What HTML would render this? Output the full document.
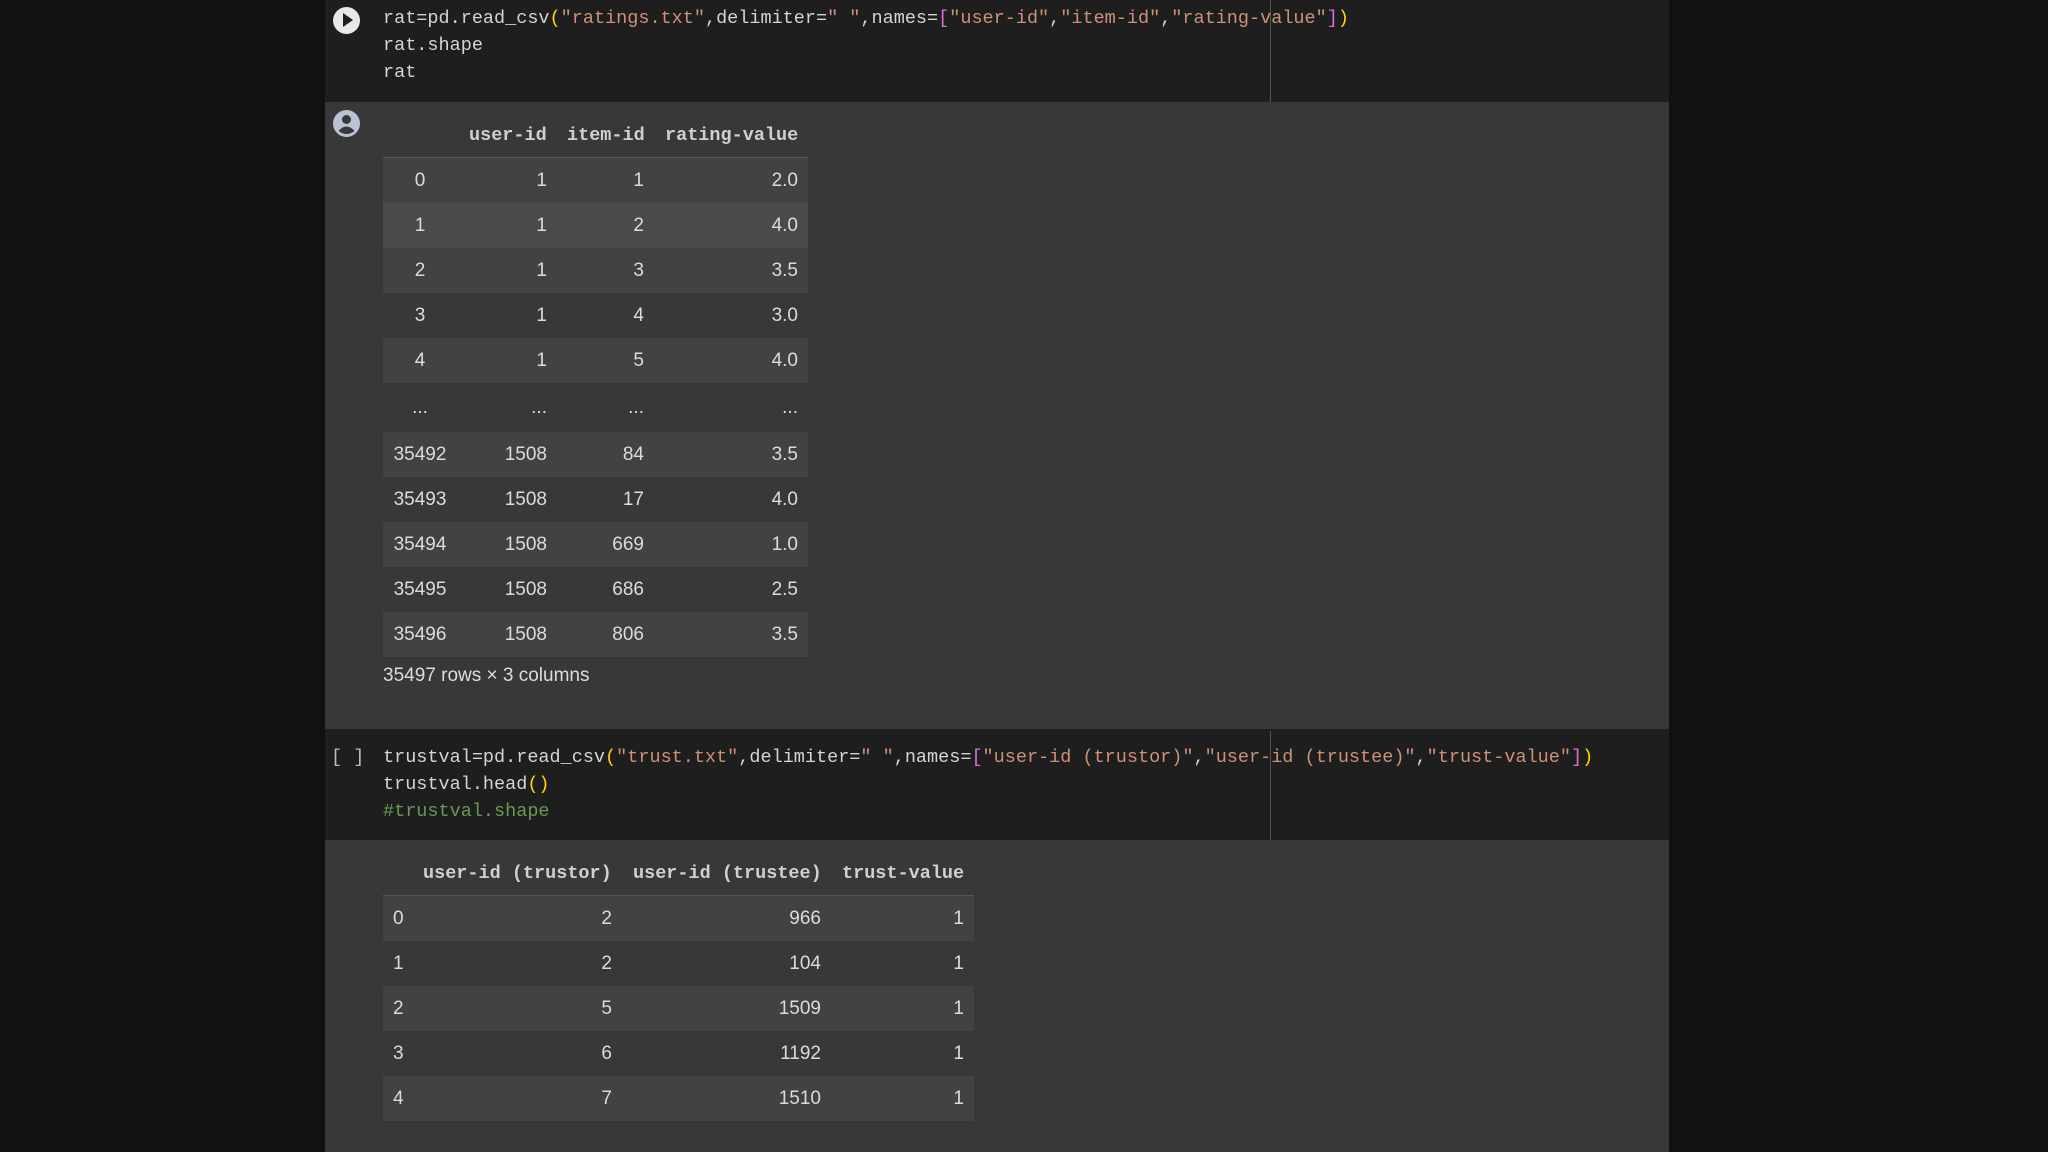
<!DOCTYPE html>
<html><head><meta charset="utf-8"><style>
*{margin:0;padding:0;box-sizing:border-box}
body{width:2048px;height:1152px;background:#111111;position:relative;overflow:hidden;font-family:"Liberation Sans",Arial,sans-serif;color:#d8d8d8}
.a{position:absolute}
.code{font-family:"Liberation Mono",monospace;font-size:18.5px;color:#d4d4d4;white-space:pre;line-height:27px}
.s{color:#ce9178}.y{color:#ffd700}.p{color:#da70d6}.g{color:#6a9955}
.row{position:absolute;height:45px}
.t{position:absolute;font-size:19px;line-height:45px;color:#dcdcdc;white-space:nowrap}
.r{text-align:right}
.h{position:absolute;font-family:"Liberation Mono",monospace;font-weight:bold;font-size:18.5px;color:#d0d0d0;white-space:pre}
</style></head><body>
<!-- cell 1 -->
<div class="a" style="left:325px;top:0;width:1344px;height:102px;background:#1e1e1e"></div>
<div class="a" style="left:1270px;top:0;width:1px;height:102px;background:#555"></div>
<div class="a" style="left:333px;top:7px;width:27px;height:27px;border-radius:50%;background:#e8e8e8"></div>
<div class="a" style="left:343px;top:13px;width:0;height:0;border-left:10px solid #1e1e1e;border-top:7px solid transparent;border-bottom:7px solid transparent"></div>
<div class="a code" style="left:383px;top:5px">rat=pd.read_csv<span class="y">(</span><span class="s">"ratings.txt"</span>,delimiter=<span class="s">" "</span>,names=<span class="p">[</span><span class="s">"user-id"</span>,<span class="s">"item-id"</span>,<span class="s">"rating-value"</span><span class="p">]</span><span class="y">)</span>
rat.shape
rat</div>
<div class="a" style="left:325px;top:102px;width:1344px;height:627px;background:#383838"></div>
<svg class="a" style="left:332px;top:109px" width="29" height="29" viewBox="0 0 29 29"><circle cx="14.5" cy="14.5" r="13.5" fill="#b8c4d6"/><circle cx="14.5" cy="10.5" r="4.5" fill="#383838"/><path d="M6.5 22 Q14.5 13 22.5 22 Q14.5 28 6.5 22Z" fill="#383838"/></svg>
<div class="h" style="left:469px;top:125px">user-id</div>
<div class="h" style="left:567px;top:125px">item-id</div>
<div class="h" style="left:665px;top:125px">rating-value</div>
<div class="a" style="left:383px;top:157px;width:425px;height:1px;background:#555"></div>
<div class="row" style="left:383px;top:158px;width:425px;background:#424242"></div>
<div class="row" style="left:383px;top:203px;width:425px;background:#4a4a4a"></div>
<div class="row" style="left:383px;top:248px;width:425px;background:#424242"></div>
<div class="row" style="left:383px;top:338px;width:425px;background:#424242"></div>
<div class="row" style="left:383px;top:432px;width:425px;background:#424242"></div>
<div class="row" style="left:383px;top:522px;width:425px;background:#424242"></div>
<div class="row" style="left:383px;top:612px;width:425px;background:#424242"></div>
<!-- table1 text -->
<div class="a" style="left:0;top:0">
<div class="t" style="left:390px;top:158px;width:60px;text-align:center">0</div><div class="t r" style="left:447px;top:158px;width:100px">1</div><div class="t r" style="left:544px;top:158px;width:100px">1</div><div class="t r" style="left:698px;top:158px;width:100px">2.0</div>
<div class="t" style="left:390px;top:203px;width:60px;text-align:center">1</div><div class="t r" style="left:447px;top:203px;width:100px">1</div><div class="t r" style="left:544px;top:203px;width:100px">2</div><div class="t r" style="left:698px;top:203px;width:100px">4.0</div>
<div class="t" style="left:390px;top:248px;width:60px;text-align:center">2</div><div class="t r" style="left:447px;top:248px;width:100px">1</div><div class="t r" style="left:544px;top:248px;width:100px">3</div><div class="t r" style="left:698px;top:248px;width:100px">3.5</div>
<div class="t" style="left:390px;top:293px;width:60px;text-align:center">3</div><div class="t r" style="left:447px;top:293px;width:100px">1</div><div class="t r" style="left:544px;top:293px;width:100px">4</div><div class="t r" style="left:698px;top:293px;width:100px">3.0</div>
<div class="t" style="left:390px;top:338px;width:60px;text-align:center">4</div><div class="t r" style="left:447px;top:338px;width:100px">1</div><div class="t r" style="left:544px;top:338px;width:100px">5</div><div class="t r" style="left:698px;top:338px;width:100px">4.0</div>
<div class="t" style="left:390px;top:385px;width:60px;text-align:center">...</div><div class="t r" style="left:447px;top:385px;width:100px">...</div><div class="t r" style="left:544px;top:385px;width:100px">...</div><div class="t r" style="left:698px;top:385px;width:100px">...</div>
<div class="t" style="left:390px;top:432px;width:60px;text-align:center">35492</div><div class="t r" style="left:447px;top:432px;width:100px">1508</div><div class="t r" style="left:544px;top:432px;width:100px">84</div><div class="t r" style="left:698px;top:432px;width:100px">3.5</div>
<div class="t" style="left:390px;top:477px;width:60px;text-align:center">35493</div><div class="t r" style="left:447px;top:477px;width:100px">1508</div><div class="t r" style="left:544px;top:477px;width:100px">17</div><div class="t r" style="left:698px;top:477px;width:100px">4.0</div>
<div class="t" style="left:390px;top:522px;width:60px;text-align:center">35494</div><div class="t r" style="left:447px;top:522px;width:100px">1508</div><div class="t r" style="left:544px;top:522px;width:100px">669</div><div class="t r" style="left:698px;top:522px;width:100px">1.0</div>
<div class="t" style="left:390px;top:567px;width:60px;text-align:center">35495</div><div class="t r" style="left:447px;top:567px;width:100px">1508</div><div class="t r" style="left:544px;top:567px;width:100px">686</div><div class="t r" style="left:698px;top:567px;width:100px">2.5</div>
<div class="t" style="left:390px;top:612px;width:60px;text-align:center">35496</div><div class="t r" style="left:447px;top:612px;width:100px">1508</div><div class="t r" style="left:544px;top:612px;width:100px">806</div><div class="t r" style="left:698px;top:612px;width:100px">3.5</div>
<div class="t" style="left:383px;top:653px">35497 rows × 3 columns</div>
</div>
<!-- cell 2 -->
<div class="a" style="left:325px;top:729px;width:1344px;height:111px;background:#1e1e1e"></div>
<div class="a" style="left:1270px;top:731px;width:1px;height:109px;background:#555"></div>
<div class="a code" style="left:331px;top:744px;color:#bbb">[ ]</div>
<div class="a code" style="left:383px;top:744px">trustval=pd.read_csv<span class="y">(</span><span class="s">"trust.txt"</span>,delimiter=<span class="s">" "</span>,names=<span class="p">[</span><span class="s">"user-id (trustor)"</span>,<span class="s">"user-id (trustee)"</span>,<span class="s">"trust-value"</span><span class="p">]</span><span class="y">)</span>
trustval.head<span class="y">()</span>
<span class="g">#trustval.shape</span></div>
<div class="a" style="left:325px;top:840px;width:1344px;height:312px;background:#383838"></div>
<div class="h" style="left:423px;top:863px">user-id (trustor)</div>
<div class="h" style="left:633px;top:863px">user-id (trustee)</div>
<div class="h" style="left:842px;top:863px">trust-value</div>
<div class="a" style="left:383px;top:895px;width:591px;height:1px;background:#555"></div>
<div class="row" style="left:383px;top:896px;width:591px;background:#424242"></div>
<div class="row" style="left:383px;top:986px;width:591px;background:#424242"></div>
<div class="row" style="left:383px;top:1076px;width:591px;background:#424242"></div>
<div class="t" style="left:393px;top:896px">0</div><div class="t r" style="left:512px;top:896px;width:100px">2</div><div class="t r" style="left:721px;top:896px;width:100px">966</div><div class="t r" style="left:864px;top:896px;width:100px">1</div>
<div class="t" style="left:393px;top:941px">1</div><div class="t r" style="left:512px;top:941px;width:100px">2</div><div class="t r" style="left:721px;top:941px;width:100px">104</div><div class="t r" style="left:864px;top:941px;width:100px">1</div>
<div class="t" style="left:393px;top:986px">2</div><div class="t r" style="left:512px;top:986px;width:100px">5</div><div class="t r" style="left:721px;top:986px;width:100px">1509</div><div class="t r" style="left:864px;top:986px;width:100px">1</div>
<div class="t" style="left:393px;top:1031px">3</div><div class="t r" style="left:512px;top:1031px;width:100px">6</div><div class="t r" style="left:721px;top:1031px;width:100px">1192</div><div class="t r" style="left:864px;top:1031px;width:100px">1</div>
<div class="t" style="left:393px;top:1076px">4</div><div class="t r" style="left:512px;top:1076px;width:100px">7</div><div class="t r" style="left:721px;top:1076px;width:100px">1510</div><div class="t r" style="left:864px;top:1076px;width:100px">1</div>
</body></html>
